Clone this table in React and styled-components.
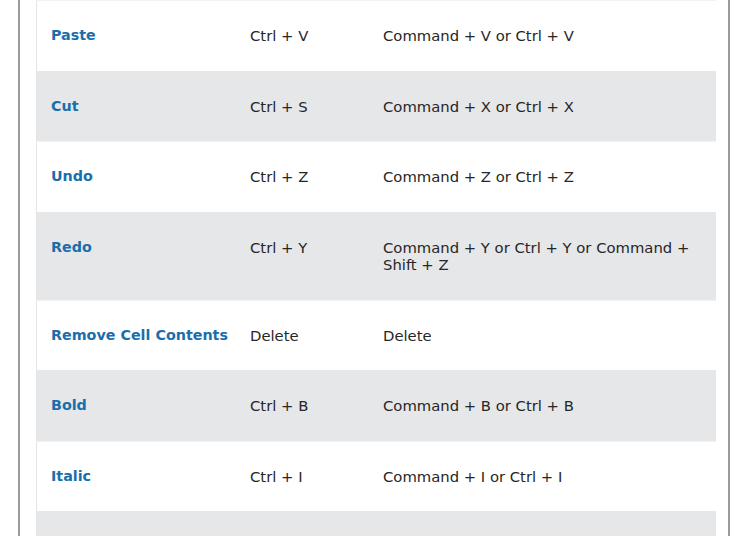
import styled, { createGlobalStyle } from "styled-components";

const shortcuts = [
  { action: "Paste", windows: "Ctrl + V", mac: "Command + V or Ctrl + V" },
  { action: "Cut", windows: "Ctrl + S", mac: "Command + X or Ctrl + X" },
  { action: "Undo", windows: "Ctrl + Z", mac: "Command + Z or Ctrl + Z" },
  {
    action: "Redo",
    windows: "Ctrl + Y",
    mac: "Command + Y or Ctrl + Y or Command + Shift + Z",
  },
  { action: "Remove Cell Contents", windows: "Delete", mac: "Delete" },
  { action: "Bold", windows: "Ctrl + B", mac: "Command + B or Ctrl + B" },
  { action: "Italic", windows: "Ctrl + I", mac: "Command + I or Ctrl + I" },
];

export default function App() {
  return (
    <>
      <GlobalStyle />
      <Page>
        <Frame>
          <Table>
            <tbody>
              {shortcuts.map((row, i) => (
                <Row key={row.action} shaded={i % 2 === 1}>
                  <ActionCell>{row.action}</ActionCell>
                  <KeyCell>{row.windows}</KeyCell>
                  <MacCell>{row.mac}</MacCell>
                </Row>
              ))}
              {/* next row, scrolled below the fold */}
              <Row shaded>
                <ActionCell />
                <KeyCell />
                <MacCell />
              </Row>
            </tbody>
          </Table>
        </Frame>
      </Page>
    </>
  );
}

const GlobalStyle = createGlobalStyle`
  html, body {
    margin: 0;
    padding: 0;
    background: #ffffff;
    overflow: hidden;
  }
  body {
    font-family: "DejaVu Sans", Verdana, sans-serif;
  }
`;

const Page = styled.div`
  width: 750px;
  height: 536px;
  overflow: hidden;
  padding-left: 18px;
  box-sizing: border-box;
`;

const Frame = styled.div`
  width: 712px;
  min-height: 536px;
  box-sizing: border-box;
  border-left: 2px solid #9a9a9a;
  border-right: 2px solid #9a9a9a;
  padding: 0 12px 0 16px;
`;

const Table = styled.table`
  width: 680px;
  border-collapse: collapse;
  table-layout: fixed;
  border-left: 1px solid #e4e4e4;
`;

const Row = styled.tr`
  background: ${(props) => (props.shaded ? "#e6e7e9" : "#ffffff")};
  border-top: 1px solid ${(props) => (props.shaded ? "#e6e7e9" : "#f2f2f2")};
`;

const Cell = styled.td`
  height: 17.5px;
  padding: 26px 14px 26px 14px;
  vertical-align: top;
  font-size: 14.8px;
  line-height: 17.5px;
  color: #262626;
`;

const ActionCell = styled(Cell)`
  width: 185px;
  padding-right: 0;
  font-weight: bold;
  font-size: 14.3px;
  color: #1a6eab;
  white-space: nowrap;
`;

const KeyCell = styled(Cell)`
  width: 105px;
`;

const MacCell = styled(Cell)`
  padding-right: 20px;
`;
